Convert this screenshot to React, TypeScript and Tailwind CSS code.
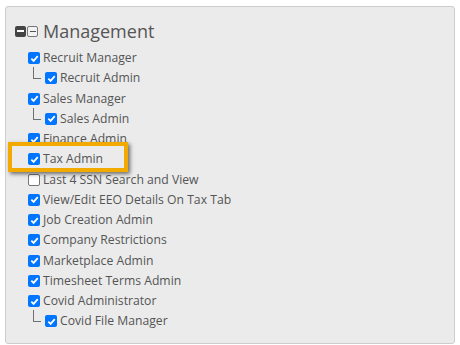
import React from 'react';

type Item = { label: string; checked: boolean; child?: boolean };

const items: Item[] = [
  { label: 'Recruit Manager', checked: true },
  { label: 'Recruit Admin', checked: true, child: true },
  { label: 'Sales Manager', checked: true },
  { label: 'Sales Admin', checked: true, child: true },
  { label: 'Finance Admin', checked: true },
  { label: 'Tax Admin', checked: true },
  { label: 'Last 4 SSN Search and View', checked: false },
  { label: 'View/Edit EEO Details On Tax Tab', checked: true },
  { label: 'Job Creation Admin', checked: true },
  { label: 'Company Restrictions', checked: true },
  { label: 'Marketplace Admin', checked: true },
  { label: 'Timesheet Terms Admin', checked: true },
  { label: 'Covid Administrator', checked: true },
  { label: 'Covid File Manager', checked: true, child: true },
];

const Box = ({ checked }: { checked: boolean }) =>
  checked ? (
    <span className="w-[12px] h-[12px] rounded-[2px] bg-[#0075ff] flex items-center justify-center shrink-0">
      <svg width="9" height="9" viewBox="0 0 10 10">
        <path d="M1.5 5.2 L4 7.6 L8.6 2.4" fill="none" stroke="white" strokeWidth="2" />
      </svg>
    </span>
  ) : (
    <span className="w-[12px] h-[12px] rounded-[2px] bg-white border border-[#767676] shrink-0" />
  );

const Row = ({ item }: { item: Item }) => (
  <div className="h-[20.25px] flex items-center">
    {item.child ? (
      <>
        <span className="ml-[5px] w-[8px] h-[12px] border-l border-b border-[#707070] self-start -mt-[1px]" />
        <span className="ml-[4px]"><Box checked={item.checked} /></span>
        <span className="ml-[3px]">{item.label}</span>
      </>
    ) : (
      <>
        <Box checked={item.checked} />
        <span className="ml-[3px]">{item.label}</span>
      </>
    )}
  </div>
);

export default function App() {
  return (
    <div className="w-[460px] h-[345px] bg-white pl-[5px] pt-[6px]" style={{ fontFamily: '"Open Sans", sans-serif' }}>
      <div className="relative w-[450px] h-[338px] bg-[#ebebeb] border border-[#cdcdcd] rounded-[3px] pl-[9px] pt-[14px] text-[#555]">
        {/* heading */}
        <div className="flex items-center h-[20px]">
          <span className="w-[11px] h-[11px] rounded-[2px] bg-[#444] flex items-center justify-center">
            <span className="w-[7px] h-[2px] bg-white" />
          </span>
          <span className="ml-[1px] w-[11px] h-[11px] rounded-[2px] bg-[#f2f2f2] border border-[#777] flex items-center justify-center">
            <span className="w-[6px] h-[1px] bg-[#555]" />
          </span>
          <span className="ml-[5px] text-[18px] leading-none text-[#555]">Management</span>
        </div>

        {/* permission list */}
        <div className="mt-[7px] pl-[13px] text-[12.2px] leading-none">
          {items.map((it) => (
            <Row key={it.label} item={it} />
          ))}
        </div>

        {/* highlight */}
        <div className="absolute left-[2px] top-[135px] w-[120px] h-[30px] border-4 border-[#f2a900] shadow-[2px_2px_4px_rgba(0,0,0,0.55)]" />
      </div>
    </div>
  );
}
